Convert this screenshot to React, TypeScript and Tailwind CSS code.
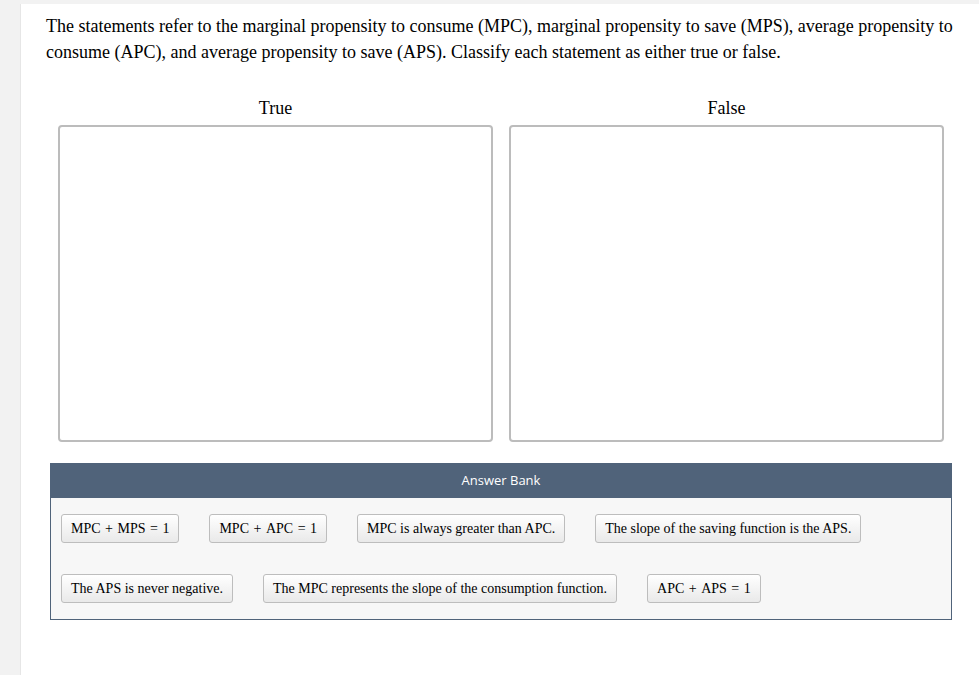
import React from 'react';

const row1 = ['MPC + MPS = 1', 'MPC + APC = 1', 'MPC is always greater than APC.', 'The slope of the saving function is the APS.'];
const row2 = ['The APS is never negative.', 'The MPC represents the slope of the consumption function.', 'APC + APS = 1'];

// equations get a touch more room around + and =
function renderLabel(label: string) {
  if (!label.includes('=')) return label;
  return label.split(' ').map((part, i) =>
    part === '+' || part === '=' ? (
      <span key={i} className="mx-[4.5px]">{part}</span>
    ) : (
      <span key={i}>{part}</span>
    )
  );
}

function Chip({ label }: { label: string }) {
  return (
    <div className="h-[29px] px-[9px] flex items-center rounded-[3px] border border-[#bdbdbd] bg-gradient-to-b from-white to-[#e9e9e9] text-[14px] text-black whitespace-nowrap">
      {renderLabel(label)}
    </div>
  );
}

function DropZone({ title }: { title: string }) {
  return (
    <div className="flex-1 flex flex-col">
      <div className="h-[38px] pt-[4px] flex items-center justify-center text-[18px] text-black">{title}</div>
      <div className="h-[317px] rounded-[4px] border-2 border-[#bcbcbc] bg-white" />
    </div>
  );
}

export default function App() {
  return (
    <div className="min-h-[675px] bg-[#f2f2f2] pt-[4px] pl-[20px] font-['Liberation_Serif','Times_New_Roman',serif]">
      <div className="min-h-[671px] bg-white border-l border-[#e6e6e6]">
        <p className="pl-[25px] pr-[20px] pt-[9px] text-[18px] leading-[26px] text-black">
          The statements refer to the marginal propensity to consume (MPC), marginal propensity to save (MPS), average propensity to consume (APC), and average propensity to save (APS). Classify each statement as either true or false.
        </p>

        <div className="mt-[22px] ml-[37px] w-[886px] flex gap-[16px]">
          <DropZone title="True" />
          <DropZone title="False" />
        </div>

        <div className="mt-[21px] ml-[29px] w-[902px] border border-[#50637a]">
          <div className="h-[34px] bg-[#50637a] flex items-center justify-center text-[13px] text-white font-['Open_Sans',sans-serif]">
            Answer Bank
          </div>
          <div className="bg-[#f7f7f7] px-[10px] pt-[16px] pb-[16px] flex flex-col gap-[31px]">
            <div className="flex gap-[30px]">
              {row1.map((l) => (
                <Chip key={l} label={l} />
              ))}
            </div>
            <div className="flex gap-[30px]">
              {row2.map((l) => (
                <Chip key={l} label={l} />
              ))}
            </div>
          </div>
        </div>
      </div>
    </div>
  );
}
